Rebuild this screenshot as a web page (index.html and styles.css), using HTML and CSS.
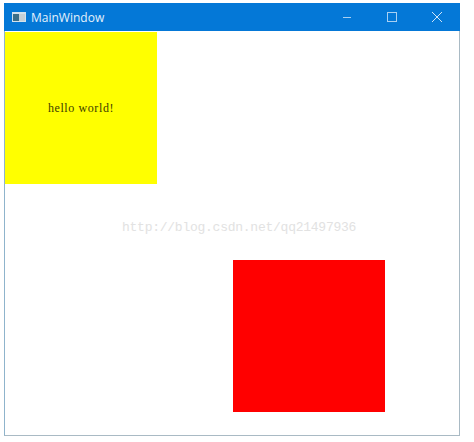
FILE: index.html
```html
<!DOCTYPE html>
<html lang="en">
<head>
    <meta charset="UTF-8">
    <title>MainWindow</title>
    <link rel="stylesheet" href="styles.css">
</head>
<body>

<div class="window">
    <div class="titlebar">
        <svg class="app-icon" width="14" height="10" viewBox="0 0 14 10">
            <rect width="14" height="10" fill="#d3e2ec"/>
            <rect x="1" y="2" width="6" height="7" fill="#3b6f88"/>
            <rect x="7" y="2" width="6" height="7" fill="#c6d0d6"/>
        </svg>
        <span class="title">MainWindow</span>
        <div class="controls">
            <svg width="10" height="10" viewBox="0 0 10 10"><path d="M1 5.5H9" stroke="#a9d0f2" fill="none"/></svg>
            <svg width="10" height="10" viewBox="0 0 10 10"><rect x="0.5" y="0.5" width="9" height="9" stroke="#a9d0f2" fill="none"/></svg>
            <svg width="10" height="10" viewBox="0 0 10 10"><path d="M0 0L10 10M10 0L0 10" stroke="#cfe4f7" fill="none"/></svg>
        </div>
    </div>
    <div class="client">
        <div class="box box-yellow">hello world!</div>
        <div class="box box-red"></div>
        <div class="watermark">http://blog.csdn.net/qq21497936</div>
    </div>
</div>

</body>
</html>
```

FILE: styles.css
```css
body {
    margin: 0;
    background-color: #fff;
    font-family: "Liberation Serif", serif;
}
.window {
    width: 456px;
    height: 433px;
    margin: 3px 0 0 4px;
    box-sizing: border-box;
    border: 1px solid #8fb4cc;
    border-top: none;
    border-right-color: #a9bac4;
    border-bottom-color: #a9bac4;
    display: flex;
    flex-direction: column;
}
.titlebar {
    height: 28px;
    margin: 0 -1px;
    background-color: #0478d7;
    display: flex;
    align-items: center;
    flex-shrink: 0;
}
.app-icon {
    margin-left: 8px;
}
.title {
    margin-left: 5px;
    color: #e3f0fb;
    font-family: "Open Sans", sans-serif;
    font-size: 12px;
}
.controls {
    margin-left: auto;
    display: flex;
    gap: 35px;
    padding-right: 18px;
}
.client {
    position: relative;
    flex: 1;
    padding-top: 1px;
}
.box {
    width: 152px;
    height: 152px;
}
.box-yellow {
    background-color: #ff0;
    display: flex;
    align-items: center;
    justify-content: center;
    color: #404000;
    font-size: 12px;
    letter-spacing: 0.6px;
}
.box-red {
    background-color: #f00;
    margin: 76px 0 0 228px;
}
.watermark {
    position: absolute;
    left: 117px;
    top: 189px;
    color: #e2e2e2;
    font-family: "Liberation Mono", monospace;
    font-size: 13px;
    letter-spacing: -0.25px;
    white-space: nowrap;
}
```
